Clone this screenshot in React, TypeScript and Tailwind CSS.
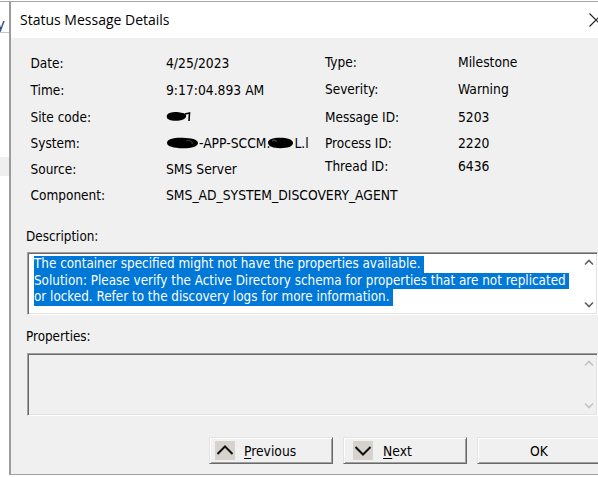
import React from "react";

const UI: React.CSSProperties = {
  fontFamily: '"DejaVu Sans Condensed", "DejaVu Sans", Tahoma, sans-serif',
};
const TITLE: React.CSSProperties = {
  fontFamily: '"Open Sans", "Noto Sans", sans-serif',
};

function Blob({ w, h, children }: { w: number; h: number; children: React.ReactNode }) {
  return (
    <svg width={w} height={h} viewBox={`0 0 ${w} ${h}`} className="shrink-0">
      {children}
    </svg>
  );
}

function ScrollChevrons({ color }: { color: string }) {
  return (
    <div className="w-[17px] shrink-0 flex flex-col justify-between items-center py-[6px]">
      <svg width="10" height="7" viewBox="0 0 10 7">
        <path d="M1 5.5 L5 1.5 L9 5.5" fill="none" stroke={color} strokeWidth="1.6" />
      </svg>
      <svg width="10" height="7" viewBox="0 0 10 7">
        <path d="M1 1.5 L5 5.5 L9 1.5" fill="none" stroke={color} strokeWidth="1.6" />
      </svg>
    </div>
  );
}

function Btn({ children, className = "" }: { children: React.ReactNode; className?: string }) {
  return (
    <div
      className={
        "h-[27px] w-[124px] shrink-0 flex items-center bg-[#f0f0f0] border border-t-[#e3e3e3] border-l-[#e3e3e3] border-r-[#696969] border-b-[#696969] shadow-[inset_1px_1px_0_#ffffff,inset_-1px_-1px_0_#a0a0a0] text-[13.75px] leading-[16px] text-black " +
        className
      }
    >
      {children}
    </div>
  );
}

export default function App() {
  const cell = "leading-[16px] whitespace-nowrap";
  const lab = "leading-[16px] whitespace-nowrap text-[13.5px]";
  return (
    <div className="w-[598px] h-[477px] overflow-hidden bg-white flex flex-col" style={UI}>
      <div className="h-px shrink-0 bg-white" />
      <div className="h-px shrink-0 bg-[#a3a3a3]" />
      <div className="h-[473px] shrink-0 flex">
        {/* background strip left of the dialog */}
        <div className="w-[9px] shrink-0 flex flex-col overflow-hidden">
          <div className="h-[31px] shrink-0 border-b border-[#c4c4c4] flex items-start pt-[12px] overflow-hidden">
            <span className="text-[15px] leading-[18px] text-[#22305e] -ml-[3px]" style={TITLE}>
              y
            </span>
          </div>
          <div className="h-[124px] shrink-0" />
          <div className="h-[19px] shrink-0 bg-[#efefef]" />
        </div>

        {/* dialog window */}
        <div className="w-[610px] shrink-0 h-[473px] flex flex-col border-l-2 border-l-[#9c9c9c] border-b border-b-[#a0a0a0]">
          {/* title bar */}
          <div className="h-[36px] shrink-0 bg-white flex items-center pl-[9px] pr-[16px]">
            <span className="text-[14px] leading-[36px] text-black" style={TITLE}>
              Status Message Details
            </span>
            <svg width="14" height="14" viewBox="0 0 14 14" className="ml-auto">
              <path d="M0.5 0.5 L13.5 13.5 M13.5 0.5 L0.5 13.5" stroke="#222" strokeWidth="1.2" />
            </svg>
          </div>

          {/* body */}
          <div className="flex-1 bg-[#f0f0f0] flex flex-col pl-[15px] text-black text-[13.75px]">
            <div className="mt-[17px] ml-[4.5px] grid grid-cols-[135.5px_159px_133px_1fr] grid-rows-[27px_26.5px_26.5px_26.3px_26px_16px] items-start">
              <div className={lab}>Date:</div>
              <div className={cell}>4/25/2023</div>
              <div className={lab + " -mt-[1.5px]"}>Type:</div>
              <div className={cell + " -mt-[1.5px]"}>Milestone</div>

              <div className={lab}>Time:</div>
              <div className={cell}>9:17:04.893 AM</div>
              <div className={lab + " -mt-[1px]"}>Severity:</div>
              <div className={cell + " -mt-[1px]"}>Warning</div>

              <div className={lab}>Site code:</div>
              <div className="h-[16px] flex items-center">
                <Blob w={26} h={11}>
                  <path
                    d="M1 4 C3 1 9 0.5 14 1.5 C18 2 21 3 20 6 C19 9 12 10.5 6 9.5 C2 9 0 7 1 4 Z"
                    fill="#000"
                  />
                  <path d="M19 3 L23.5 2 L23 10" fill="none" stroke="#000" strokeWidth="1.6" />
                </Blob>
              </div>
              <div className={lab}>Message ID:</div>
              <div className={cell}>5203</div>

              <div className={lab}>System:</div>
              <div className="h-[16px] flex items-center">
                <Blob w={33} h={12}>
                  <path
                    d="M1 6 C1 2 8 0.5 16.5 0.8 C25 1 32 2.5 32 6 C32 9.5 25 11.5 16.5 11.3 C8 11 1 9.5 1 6 Z"
                    fill="#000"
                  />
                  <path d="M20 4 C24 3 27 4 26 7" fill="none" stroke="#555" strokeWidth="0.8" />
                </Blob>
                <span className={cell}>-APP-SCCM.</span>
                <div className="-ml-[3px] flex items-center">
                  <Blob w={27} h={12}>
                    <path
                      d="M1 6 C0.5 2.5 6 0.8 13 0.8 C20 0.8 26 2.5 26 6 C26 9.5 20 11.3 13 11.2 C6 11 1.5 9.5 1 6 Z"
                      fill="#000"
                    />
                    <path d="M5 4 C7 2.5 10 3 9 5" fill="none" stroke="#777" strokeWidth="0.8" />
                  </Blob>
                </div>
                <span className={cell}>L.l</span>
              </div>
              <div className={lab}>Process ID:</div>
              <div className={cell}>2220</div>

              <div className={lab}>Source:</div>
              <div className={cell}>SMS Server</div>
              <div className={lab + " -mt-[3.3px]"}>Thread ID:</div>
              <div className={cell + " -mt-[3.3px]"}>6436</div>

              <div className={lab}>Component:</div>
              <div className={cell + " col-span-3"}>SMS_AD_SYSTEM_DISCOVERY_AGENT</div>
            </div>

            {/* Description */}
            <div className="mt-[25.5px] leading-[16px] whitespace-nowrap text-[13.35px]">Description:</div>
            <div className="mt-[7.5px] ml-[1px] w-[571px] h-[63px] shrink-0 flex bg-white border border-t-[#a0a0a0] border-l-[#a0a0a0] border-r-white border-b-white shadow-[inset_1px_1px_0_#696969,inset_-1px_-1px_0_#e3e3e3]">
              <div className="flex-1 pl-[6px] pt-[1px] text-[13.35px] text-white">
                <div className="h-[16.5px]">
                  <span className="inline-block h-[16.5px] leading-[16.5px] bg-[#0078d7] whitespace-pre">
                    {"The container specified might not have the properties available. "}
                  </span>
                </div>
                <div className="h-[16.5px]">
                  <span className="inline-block h-[16.5px] leading-[16.5px] bg-[#0078d7] whitespace-pre">
                    {"Solution: Please verify the Active Directory schema for properties that are not replicated "}
                  </span>
                </div>
                <div className="h-[16.5px]">
                  <span className="inline-block h-[16.5px] leading-[16.5px] bg-[#0078d7] whitespace-pre">
                    {"or locked. Refer to the discovery logs for more information. "}
                  </span>
                </div>
              </div>
              <ScrollChevrons color="#606060" />
            </div>

            {/* Properties */}
            <div className="mt-[14px] leading-[16px] whitespace-nowrap text-[13.35px]">Properties:</div>
            <div className="mt-[8px] ml-[1px] w-[571px] h-[63px] shrink-0 flex bg-[#f0f0f0] border border-t-[#a0a0a0] border-l-[#a0a0a0] border-r-white border-b-white shadow-[inset_1px_1px_0_#696969,inset_-1px_-1px_0_#e3e3e3]">
              <div className="flex-1" />
              <ScrollChevrons color="#c2c2c2" />
            </div>

            {/* Buttons */}
            <div className="mt-[21px] ml-[183px] flex gap-[10px]">
              <Btn className="pl-[5px]">
                <div className="w-[20px] h-[19px] bg-[#d6d3ce] flex items-center justify-center">
                  <svg width="20" height="19" viewBox="0 0 20 19">
                    <path d="M2.5 13 L10 5.5 L17.5 13" fill="none" stroke="#111" strokeWidth="2" />
                  </svg>
                </div>
                <span className="ml-[9px] whitespace-nowrap">
                  <span className="underline underline-offset-2">P</span>revious
                </span>
              </Btn>
              <Btn className="pl-[9px]">
                <div className="w-[20px] h-[19px] bg-[#d6d3ce] flex items-center justify-center">
                  <svg width="20" height="19" viewBox="0 0 20 19">
                    <path d="M2.5 6 L10 13.5 L17.5 6" fill="none" stroke="#111" strokeWidth="2" />
                  </svg>
                </div>
                <span className="ml-[10px] whitespace-nowrap">
                  <span className="underline underline-offset-2">N</span>ext
                </span>
              </Btn>
              <Btn className="justify-center w-[122px]">
                <span className="whitespace-nowrap">OK</span>
              </Btn>
            </div>
          </div>
        </div>
      </div>
    </div>
  );
}
